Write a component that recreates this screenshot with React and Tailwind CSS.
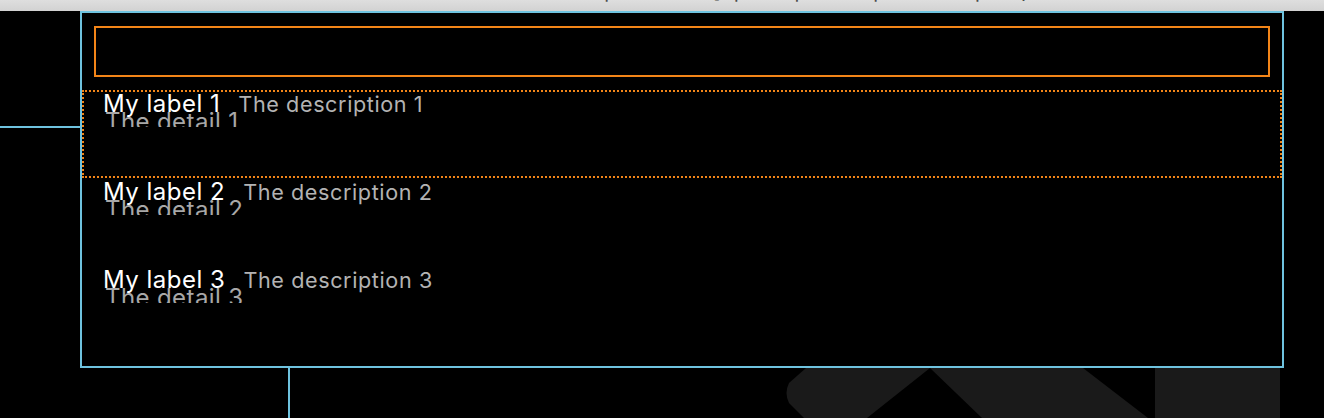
const items = [
  { label: 'My label 1', description: 'The description 1', detail: 'The detail 1' },
  { label: 'My label 2', description: 'The description 2', detail: 'The detail 2' },
  { label: 'My label 3', description: 'The description 3', detail: 'The detail 3' },
]

function Letterpress() {
  return (
    <svg width="496" height="50" viewBox="0 0 496 50" className="block">
      <path d="M22 0 L146 0 L83 50 L20 50 L5 35 Q0 25 5 15 Z" fill="#1a1a1a" />
      <path d="M146 0 L299 0 L364 50 L198 50 Z" fill="#1a1a1a" />
      <rect x="371" y="0" width="125" height="50" fill="#1a1a1a" />
    </svg>
  )
}

export default function App() {
  return (
    <div className="relative w-[1324px] h-[418px] overflow-hidden bg-black" style={{ fontFamily: 'Inter, "Noto Sans", sans-serif' }}>
      {/* title bar */}
      <div className="h-[11px] overflow-hidden bg-gradient-to-b from-[#dedede] to-[#d2d2d2] flex pl-[434px]">
        <p className="text-[20px] leading-[20px] -mt-[19px] text-[#4a4a4a] whitespace-nowrap">[Extension Development Host] quickinput-sample (Workspace)</p>
      </div>

      {/* workbench */}
      <div className="flex h-[407px]">
        <div className="w-[290px] border-r-2 border-[#6fc3df] flex flex-col">
          <div className="h-[117px] border-b-2 border-[#6fc3df]" />
          <div className="flex-1" />
        </div>
        <div className="flex-1 flex flex-col justify-end items-end pr-[44px]">
          <Letterpress />
        </div>
      </div>

      {/* quick pick */}
      <div className="absolute left-[80px] top-[11px] w-[1204px] border-2 border-[#6fc3df] bg-black pt-[13px] pb-[12px]">
        <div className="mx-[12px] h-[51px] border-2 border-[#f38518]" />
        <div className="mt-[13px]">
          {items.map((it, i) => (
            <div
              key={i}
              className={`h-[88px] pl-[21px] pt-[3px] ${i === 0 ? 'outline-2 outline-dotted outline-[#f38518] -outline-offset-2' : ''}`}
            >
              <div className="h-[34px] overflow-hidden">
                <div className="h-[18px] leading-[22px] flex items-baseline whitespace-nowrap">
                  <span className="text-[24px] tracking-[0.5px] text-white">{it.label}</span>
                  <span className="text-[21.6px] tracking-[0.6px] text-[#b3b3b3] ml-[18px]">{it.description}</span>
                </div>
                <div className="text-[24px] leading-[22px] tracking-[0.4px] text-[#a8a8a8] whitespace-nowrap pl-[2px]">{it.detail}</div>
              </div>
            </div>
          ))}
        </div>
      </div>
    </div>
  )
}
